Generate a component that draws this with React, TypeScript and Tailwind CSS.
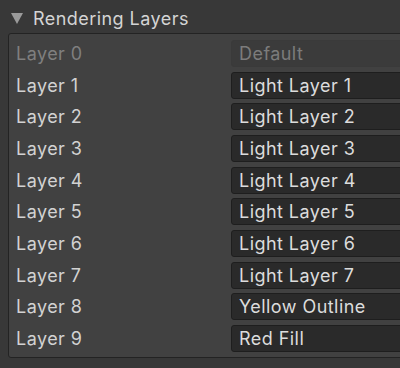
const rows = [
  { label: "Layer 0", value: "Default", disabled: true },
  { label: "Layer 1", value: "Light Layer 1" },
  { label: "Layer 2", value: "Light Layer 2" },
  { label: "Layer 3", value: "Light Layer 3" },
  { label: "Layer 4", value: "Light Layer 4" },
  { label: "Layer 5", value: "Light Layer 5" },
  { label: "Layer 6", value: "Light Layer 6" },
  { label: "Layer 7", value: "Light Layer 7" },
  { label: "Layer 8", value: "Yellow Outline" },
  { label: "Layer 9", value: "Red Fill" },
];

export default function App() {
  return (
    <div className="h-[368px] w-[400px] overflow-hidden bg-[#383838] font-['Inter',sans-serif] text-[18px] tracking-[0.025em]">
      <div className="flex h-[33px] items-center gap-[10px] pl-[11px] pt-[3px]">
        <svg width="12" height="11" viewBox="0 0 12 11">
          <path d="M0 0 L12 0 L6 11 Z" fill="#9a9a9a" />
        </svg>
        <span className="text-[#d4d4d4]">Rendering Layers</span>
      </div>
      <div className="ml-[8px] mr-[-4px] flex flex-col gap-[4.67px] rounded-[3px] border border-[#232323] bg-[#414141] pb-[5px] pl-[7px] pt-[6px]">
        {rows.map((r) => (
          <div key={r.label} className="flex h-[27px] items-center">
            <span className={`w-[215px] shrink-0 ${r.disabled ? "text-[#7f7f7f]" : "text-[#d2d2d2]"}`}>{r.label}</span>
            <div
              className={`flex h-full flex-1 items-center rounded-[3px] border pl-[7px] ${
                r.disabled
                  ? "border-[#3a3a3a] bg-[#3b3b3b] text-[#7c7c7c]"
                  : "border-[#1e1e1e] bg-[#2a2a2a] text-[#dcdcdc]"
              }`}
            >
              {r.value}
            </div>
          </div>
        ))}
      </div>
    </div>
  );
}
